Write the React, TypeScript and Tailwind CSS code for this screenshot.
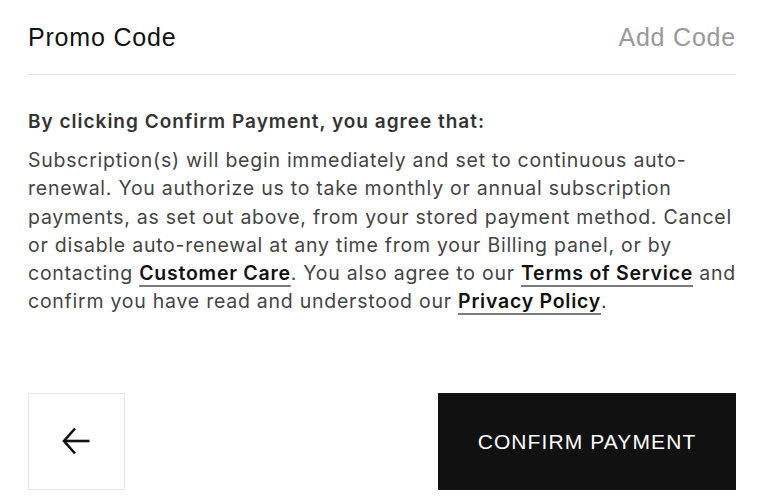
import React from "react";

const Link = ({ children }: { children: React.ReactNode }) => (
  <a className="font-semibold text-[#111] underline decoration-[#7a7a7a] decoration-[2px] underline-offset-[5px]">
    {children}
  </a>
);

export default function App() {
  return (
    <div className="w-[768px] h-[503px] bg-white overflow-hidden pl-[28px] pr-[32px] font-['Inter',sans-serif]">
      <div className="flex items-center justify-between h-[75px] border-b border-[#e3e3e3] pt-[2px]">
        <span className="text-[25px] text-[#111] font-['Liberation_Sans',sans-serif] tracking-[0.8px]">Promo Code</span>
        <span className="text-[25px] text-[#999] font-['Liberation_Sans',sans-serif] tracking-[0.8px]">Add Code</span>
      </div>
      <div className="pt-[34px]">
        <p className="text-[19px] font-semibold text-[#333] leading-[26px] tracking-[1px]">By clicking Confirm Payment, you agree that:</p>
        <p className="mt-[11px] text-[19.5px] text-[#444] leading-[28.3px] tracking-[0.75px]">
          Subscription(s) will begin immediately and set to continuous auto-
          <br />
          renewal. You authorize us to take monthly or annual subscription
          <br />
          payments, as set out above, from your stored payment method. Cancel
          <br />
          or disable auto-renewal at any time from your Billing panel, or by
          <br />
          contacting <Link>Customer Care</Link>. You also agree to our <Link>Terms of Service</Link> and
          <br />
          confirm you have read and understood our <Link>Privacy Policy</Link>.
        </p>
      </div>
      <div className="flex justify-between mt-[77px]">
        <button className="w-[97px] h-[97px] border border-[#e5e5e5] flex items-center justify-center">
          <svg width="29" height="28" viewBox="0 0 29 28" fill="none" stroke="#111" strokeWidth="2.6" strokeLinecap="butt" strokeLinejoin="miter">
            <path d="M27.5 14H2" />
            <path d="M13 1.5L2 14L13 26.5" />
          </svg>
        </button>
        <button className="w-[298px] h-[97px] bg-[#111] text-white text-[21px] tracking-[1.1px] font-['Liberation_Sans',sans-serif] flex items-center justify-center">
          CONFIRM PAYMENT
        </button>
      </div>
    </div>
  );
}
